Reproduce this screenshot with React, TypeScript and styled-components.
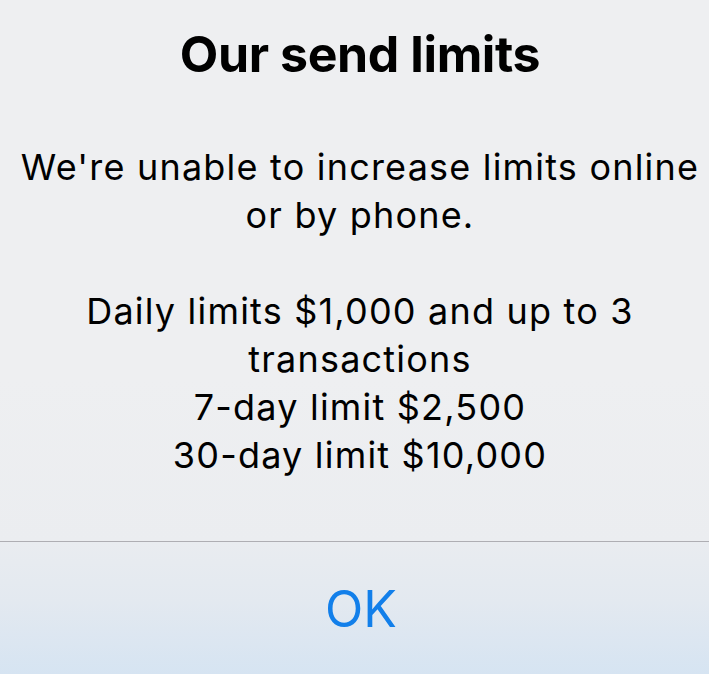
import React from "react";
import styled, { createGlobalStyle } from "styled-components";

const Global = createGlobalStyle`
  html, body { margin: 0; padding: 0; }
  body { width: 709px; height: 674px; overflow: hidden; }
  #root { height: 100%; }
`;

const Alert = styled.div`
  height: 674px;
  display: flex;
  flex-direction: column;
  font-family: Inter, "Noto Sans", sans-serif;
  color: #000;
  background: #eeeff1;
`;

const Content = styled.div`
  height: 541px;
  box-sizing: border-box;
  padding: 22px 0 0 11px;
  display: flex;
  flex-direction: column;
  align-items: center;
  text-align: center;
  background: linear-gradient(180deg, #eeeff1 0%, #eeeff1 70%, #ebedf0 100%);
`;

const Title = styled.h1`
  margin: 0;
  font-size: 50px;
  font-weight: 700;
  line-height: 64px;
  letter-spacing: -0.4px;
`;

const Message = styled.p`
  margin: 57px 0 0;
  font-size: 36px;
  font-weight: 400;
  line-height: 48px;
  letter-spacing: 1.2px;
  white-space: nowrap;
`;

const Gap = styled.span`
  display: block;
  height: 48px;
`;

const Divider = styled.div`
  height: 1px;
  background: #aeaeb3;
`;

const Button = styled.button`
  flex: 1;
  border: 0;
  margin: 0;
  padding: 2px 0 0 13px;
  font-family: Inter, "Noto Sans", sans-serif;
  font-size: 50px;
  font-weight: 400;
  color: #127fea;
  background: linear-gradient(180deg, #e9ecf0 0%, #e3e9f0 45%, #d6e4f2 100%);
`;

export default function App() {
  return (
    <>
      <Global />
      <Alert>
        <Content>
          <Title>Our send limits</Title>
          <Message>
            We're unable to increase limits online
            <br />
            or by phone.
            <Gap />
            Daily limits $1,000 and up to 3
            <br />
            transactions
            <br />
            7-day limit $2,500
            <br />
            30-day limit $10,000
          </Message>
        </Content>
        <Divider />
        <Button>OK</Button>
      </Alert>
    </>
  );
}
